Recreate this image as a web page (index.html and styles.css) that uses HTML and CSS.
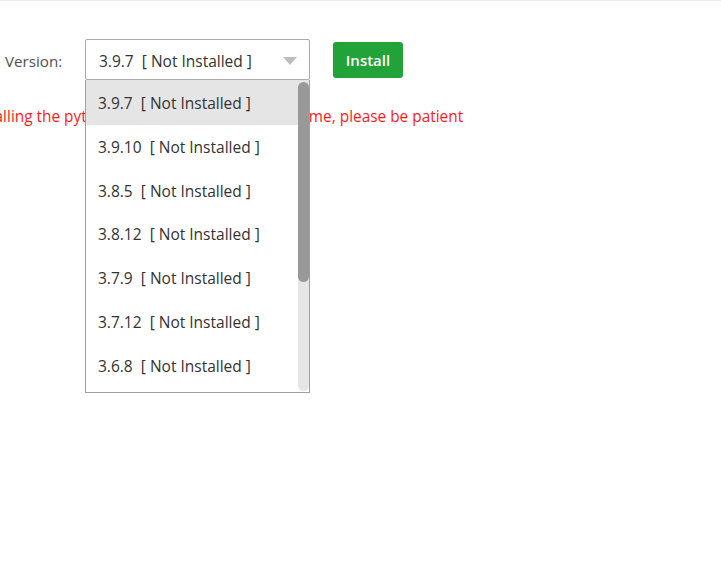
FILE: index.html
```html
<!DOCTYPE html>
<html>
<head>
<meta charset="utf-8">
<link rel="stylesheet" href="styles.css">
</head>
<body>
<div class="topline"></div>
<div class="panel">
  <div class="form-row">
    <label class="label">Version:</label>
    <div class="select-wrap">
      <div class="select">
        <span class="select-text">3.9.7&nbsp; [ Not Installed ]</span>
        <span class="arrow"></span>
      </div>
      <div class="dropdown">
        <ul class="options">
          <li class="option active">3.9.7&nbsp; [ Not Installed ]</li>
          <li class="option">3.9.10&nbsp; [ Not Installed ]</li>
          <li class="option">3.8.5&nbsp; [ Not Installed ]</li>
          <li class="option">3.8.12&nbsp; [ Not Installed ]</li>
          <li class="option">3.7.9&nbsp; [ Not Installed ]</li>
          <li class="option">3.7.12&nbsp; [ Not Installed ]</li>
          <li class="option">3.6.8&nbsp; [ Not Installed ]</li>
        </ul>
        <div class="scrollbar"><div class="thumb"></div></div>
      </div>
    </div>
    <button class="btn-install">Install</button>
  </div>
  <p class="notice">Installing the py<span class="gap">thon environment takes a long ti</span>me, please be patient</p>
</div>
</body>
</html>
```
FILE: styles.css
```css
html, body {
  margin: 0;
  padding: 0;
  background: #fff;
  font-family: "Open Sans", "Noto Sans", sans-serif;
  font-size: 15px;
}
body {
  min-height: 100vh;
}
.topline {
  height: 1px;
  background: #ececec;
}
.panel {
  padding-top: 38px;
  min-height: 520px;
}
.form-row {
  display: flex;
  align-items: center;
  height: 41px;
}
.label {
  color: #505050;
  padding-left: 5px;
  width: 80px;
  font-size: 15.2px;
  padding-top: 2px;
}
.select-wrap {
  position: relative;
  width: 225px;
}
.select {
  box-sizing: border-box;
  height: 41px;
  border: 1px solid #aaa;
  border-radius: 2px;
  display: flex;
  align-items: center;
  padding-left: 13px;
  padding-top: 2px;
  color: #333;
  font-size: 15.5px;
  position: relative;
}
.arrow {
  position: absolute;
  right: 12px;
  top: 17px;
  width: 0;
  height: 0;
  border-left: 7px solid transparent;
  border-right: 7px solid transparent;
  border-top: 8px solid #bdbdbd;
}
.dropdown {
  position: absolute;
  left: 0;
  top: 41px;
  width: 225px;
  height: 313px;
  box-sizing: border-box;
  border: 1px solid #a0a0a0;
  border-top: none;
  background: #fff;
  overflow: hidden;
  z-index: 5;
}
.options {
  list-style: none;
  margin: 0;
  padding: 1px 0 0;
}
.option {
  height: 43.8px;
  line-height: 45px;
  padding-left: 12px;
  color: #333;
  font-size: 15.5px;
  white-space: nowrap;
}
.option.active {
  background: #e5e5e5;
  margin-top: -1px;
  padding-top: 1px;
}
.scrollbar {
  position: absolute;
  right: 0;
  top: 2px;
  bottom: 1px;
  width: 11px;
  border-radius: 6px;
  background: #e6e6e6;
}
.thumb {
  height: 200px;
  border-radius: 6px;
  background: #999;
}
.btn-install {
  margin-left: 23px;
  height: 36px;
  width: 70px;
  border: none;
  border-radius: 3px;
  background: #21a33a;
  color: #fff;
  font-family: inherit;
  font-size: 15px;
  font-weight: 600;
  padding: 0;
  cursor: pointer;
}
.notice {
  margin: 0;
  margin-top: 26px;
  text-indent: -32px;
  color: #ff1a1a;
  font-size: 15.4px;
  white-space: nowrap;
}
.gap {
  letter-spacing: -0.17px;
}
```
